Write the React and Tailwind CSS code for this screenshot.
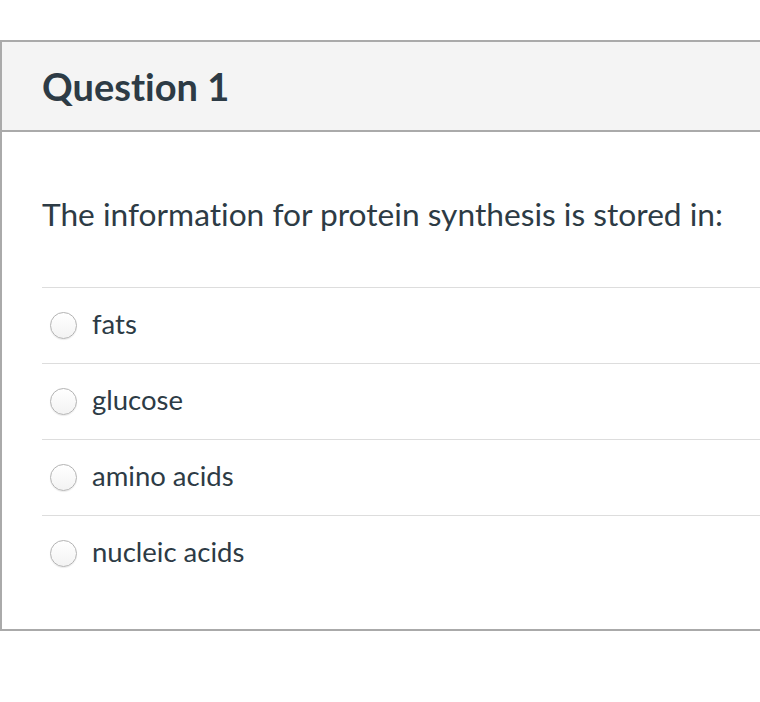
import React from 'react';

const answers = ['fats', 'glucose', 'amino acids', 'nucleic acids'];

const Radio = () => (
  <span className="w-[27px] h-[27px] shrink-0 rounded-full border border-[#b3b3b3] bg-gradient-to-b from-[#ffffff] to-[#f3f3f3] shadow-[0_1px_1px_rgba(0,0,0,0.08)]" />
);

const App = () => {
  return (
    <div className="w-[760px] h-[702px] bg-white pt-10 overflow-hidden [font-variant-ligatures:none]" style={{ fontFamily: 'Lato, "Open Sans", sans-serif' }}>
      <div className="w-[800px] border-y-2 border-l-2 border-[#aaaaaa] text-[#2d3b45]">
        <div className="h-[90px] bg-[#f4f4f4] border-b-2 border-[#aaaaaa] flex items-center pl-10">
          <h2 className="text-[38px] font-bold leading-none">Question 1</h2>
        </div>
        <div className="pl-10 pt-[62px] pb-[38px]">
          <p className="text-[31.7px] leading-[40px] mb-[53px]">The information for protein synthesis is stored in:</p>
          {answers.map((a) => (
            <div key={a} className="border-t border-[#dddddd] h-[76px] flex items-center gap-[15px] pl-2">
              <Radio />
              <span className="text-[27.5px] -mt-[3px]">{a}</span>
            </div>
          ))}
        </div>
      </div>
    </div>
  );
};

export default App;
